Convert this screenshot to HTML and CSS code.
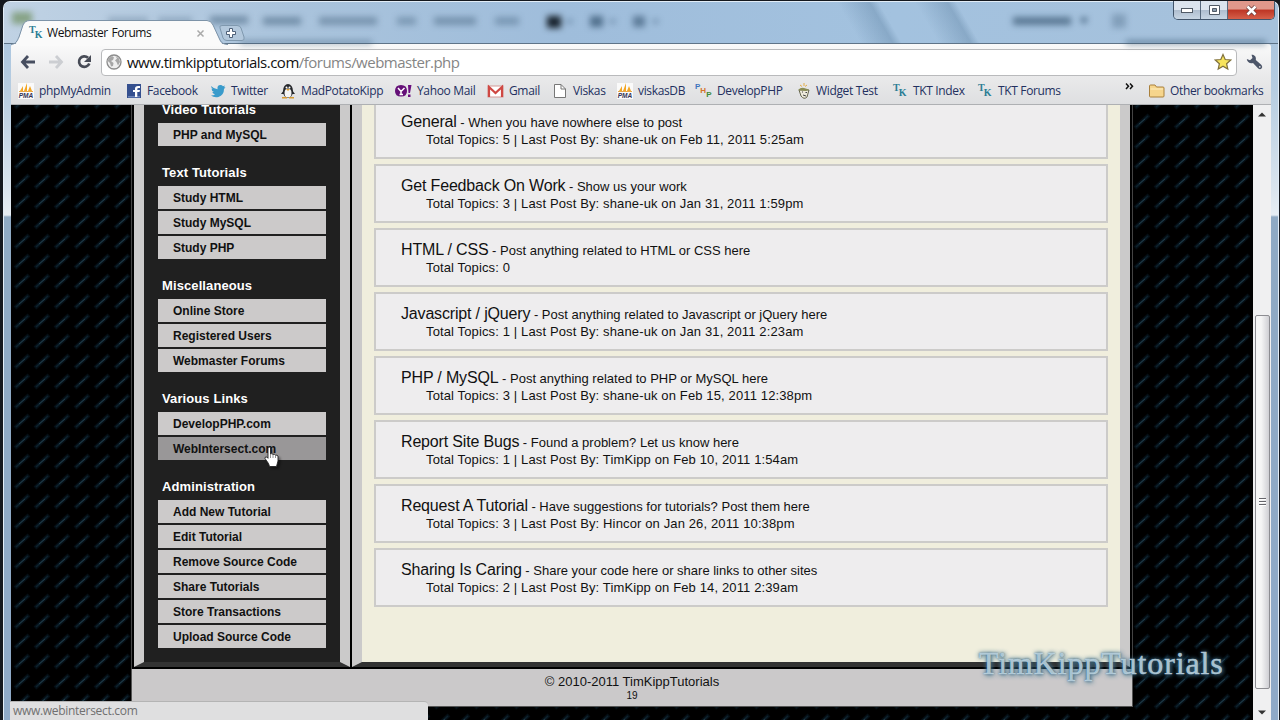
FILE: index.html
```
<!DOCTYPE html>
<html lang="en">
<head>
    <meta charset="UTF-8">
    <title>Webmaster Forums</title>
    <link rel="stylesheet" href="styles.css">
</head>
<body>
    <div class="window">
        <div class="titlebar">
            <svg class="backdrop" width="1280" height="44">
                <g fill="#31506c">
                    <rect x="108" y="17" width="40" height="8" opacity=".25"/>
                    <rect x="158" y="17" width="34" height="8" opacity=".25"/>
                    <rect x="210" y="16" width="38" height="8" opacity=".45"/>
                    <rect x="263" y="17" width="38" height="8" opacity=".45"/>
                    <rect x="319" y="17" width="58" height="8" opacity=".4"/>
                    <rect x="397" y="17" width="19" height="8" opacity=".35"/>
                    <rect x="434" y="17" width="42" height="8" opacity=".4"/>
                    <rect x="495" y="17" width="24" height="8" opacity=".35"/>
                    <rect x="547" y="16" width="14" height="12" fill="#17222c"/>
                    <rect x="590" y="16" width="13" height="11" opacity=".7"/>
                    <rect x="633" y="16" width="12" height="11" opacity=".6"/>
                    <path d="M566 20h7l-3 4zM609 20h7l-3 4zM652 20h7l-3 4z" opacity=".7"/>
                    <rect x="1013" y="17" width="58" height="8" opacity=".65"/>
                    <path d="M1080 18h8l-4 6z"/>
                    <rect x="1112" y="14" width="14" height="14" opacity=".3"/>
                    <rect x="1126" y="41" width="140" height="4" opacity=".8"/>
                    <rect x="240" y="41" width="132" height="4" opacity=".6"/>
                </g>
                <rect x="12" y="12" width="20" height="12" fill="#6d8f5d" opacity=".7"/>
            </svg>
            <div class="tab">
                <svg class="tab-shape" width="226" height="26" viewBox="0 0 226 26">
                    <path d="M0 26C5 25 6 22 8 18L12 5Q14 .5 19 .5H196Q200 .5 202 5L209 21Q211 25 217 26Z" fill="#fafafa"/>
                    <path d="M0 24.500C5 24 6 21 8 17L12 5Q14 .5 19 .5H196Q200 .5 202 5L209 20Q211 24.500 217 24.500" fill="none" stroke="#7d93a8"/>
                </svg>
                <span class="icon tk"><b>T</b><b>K</b></span>
                <span class="tab-title">Webmaster Forums</span>
                <svg class="tab-close" width="9" height="9" viewBox="0 0 9 9"><path d="M1.500 1.500L7.500 7.500M7.500 1.500L1.500 7.500" stroke="#a9a9a9" stroke-width="1.500"/></svg>
            </div>
            <svg class="new-tab" width="30" height="17" viewBox="0 0 30 17">
                <path d="M1 3Q0 .5 3 .5H18Q21 .5 22 3L25 12Q26 15.500 23 15.500H8Q5 15.500 4 13Z" fill="#b3c8dc" stroke="#7f98ae"/>
                <path d="M10.500 3.500h3v3h3v3h-3v3h-3v-3h-3v-3h3z" fill="#fff" stroke="#4e6078"/>
            </svg>
            <div class="controls">
                <span class="control minimize"><svg width="14" height="7"><rect x="1.500" y="1.500" width="11" height="4" fill="#fff" stroke="#505a66"/></svg></span>
                <span class="control maximize"><svg width="13" height="11"><path d="M1.500 .5h10v9h-10z" fill="#fff" stroke="#505a66"/><path d="M4.500 3.500h4v3h-4z" fill="#8b9dae" stroke="#505a66"/></svg></span>
                <span class="control close"><svg width="13" height="11" viewBox="0 0 13 11"><path d="M2.500 1.500L10.500 9.500M10.500 1.500L2.500 9.500" stroke="#673b39" stroke-width="4"/><path d="M2.500 1.500L10.500 9.500M10.500 1.500L2.500 9.500" stroke="#fff" stroke-width="2.500"/></svg></span>
            </div>
        </div>

        <div class="toolbar">
            <svg class="nav-icon" width="16" height="16" viewBox="0 0 16 16"><path d="M8 2L2.500 8L8 14M3 8H15" fill="none" stroke="#474e60" stroke-width="2.800"/></svg>
            <svg class="nav-icon" width="16" height="16" viewBox="0 0 16 16"><path d="M8 2L13.500 8L8 14M13 8H1" fill="none" stroke="#ccced2" stroke-width="2.800"/></svg>
            <svg class="nav-icon" width="16" height="16" viewBox="0 0 16 16"><path d="M12 3.800A5.300 5.300 0 1 0 13.300 9.500" fill="none" stroke="#474b56" stroke-width="2.700"/><path d="M15 1V8H8Z" fill="#474b56"/></svg>
            <div class="omnibox">
                <svg width="16" height="16" viewBox="0 0 16 16">
                    <circle cx="8" cy="8" r="7" fill="#eee" stroke="#8c8c8c" stroke-width="1.300"/>
                    <path d="M2.500 4.500L6 2L8 3.500L7 6L5 7L7.500 9L7 12L5 12.500L4 9L1.800 7zM9.500 2L13 4.500L14 8L12 11.500L10.500 8L9 6.500L11 4.500z" fill="#a6a6a6"/>
                </svg>
                <span class="url">www.timkipptutorials.com<span class="path">/forums/webmaster.php</span></span>
                <svg class="star" width="18" height="18" viewBox="0 0 18 18"><path d="M9 1.500L11.200 6.500L16.700 7L12.600 10.700L13.800 16.100L9 13.300L4.200 16.100L5.400 10.700L1.300 7L6.800 6.500Z" fill="#f8e45c" stroke="#80713c" stroke-width="1.200"/></svg>
            </div>
            <svg class="wrench" width="17" height="16" viewBox="0 0 17 16"><path d="M5.500 .8C8.500 .5 10.500 3 9.800 6L15.500 11Q17 13 15.500 14.500Q14 16 12 14.300L7 9C4 10 1 8 .8 5L4 6.200L6.500 4Z" fill="#4c5569"/><circle cx="13.800" cy="12.800" r=".9" fill="#ddd"/></svg>
        </div>

        <div class="bookmarks">
            <span class="bookmark"><span class="icon pma"><svg width="14" height="9" viewBox="0 0 14 9"><path d="M1 8L4 3V8zM5 8L8 0V8zM9 8L11 3L13 8z" fill="#f3a623"/><path d="M0 8.500H14" stroke="#e8a848"/></svg><b>PMA</b></span>phpMyAdmin</span>
            <span class="bookmark"><svg width="16" height="16" viewBox="0 0 16 16"><rect x="1" y="1" width="14" height="14" fill="#35508f"/><rect x="2" y="13" width="12" height="1.500" fill="#6d84b8"/><path d="M9 14V9H7V7H9V5.500Q9 3 12 3H14V5H12.500Q11.300 5 11.300 6V7H14L13.500 9H11.300V14Z" fill="#fff"/></svg>Facebook</span>
            <span class="bookmark"><svg width="16" height="16" viewBox="0 0 16 16"><path d="M1 3Q4 6 7.500 6.200Q7 2 10.500 2Q12 2 13 3.200L15 2.500L14 4.300L15.500 4.200L14 6Q14 12 8.500 14Q4 15 1 12.500Q4 12.500 5 11.300Q3 11 2.300 9H4Q1.500 8 1.500 5.500L2.800 6Q1 4.500 1 3Z" fill="#3a9bcb"/></svg>Twitter</span>
            <span class="bookmark"><svg width="16" height="16" viewBox="0 0 16 16"><ellipse cx="8" cy="8" rx="5" ry="7" fill="#25272b"/><path d="M4 7L1 11L4 11M12 7L15 11L12 11" fill="#25272b"/><ellipse cx="8" cy="10" rx="3.500" ry="4.500" fill="#f4f4f4"/><circle cx="6.500" cy="4.500" r="1" fill="#fff"/><circle cx="9.500" cy="4.500" r="1" fill="#fff"/><path d="M6 6H10L8 8ZM2 14H7V15.500H2ZM9 14H14V15.500H9Z" fill="#d79a31"/></svg>MadPotatoKipp</span>
            <span class="bookmark"><svg width="17" height="16" viewBox="0 0 17 16"><path d="M6 2Q12 2 12 8Q12 13.500 6 13.500Q0 13.500 0 8Q0 2 6 2Z" fill="#651078"/><path d="M3 5L6 8.500L9.500 5M6 8V11.500M4.500 11.500H8" fill="none" stroke="#fff" stroke-width="1.500"/><path d="M13 2H16.500L15 10H13.500ZM13 11.500H15.500V14H13Z" fill="#6b1080"/></svg>Yahoo Mail</span>
            <span class="bookmark"><svg width="17" height="16" viewBox="0 0 17 16"><rect x="1" y="3" width="15" height="11" fill="#fff" stroke="#d49a98"/><path d="M2 14V4L8.500 10L15 4V14" fill="none" stroke="#cf4843" stroke-width="2.200"/></svg>Gmail</span>
            <span class="bookmark"><svg width="15" height="16" viewBox="0 0 15 16"><path d="M1.500 1.500H8L12.500 6V14.500H1.500Z" fill="#fff" stroke="#777"/><path d="M8 1.500V6H12.500" fill="none" stroke="#777"/></svg>Viskas</span>
            <span class="bookmark"><span class="icon pma"><svg width="14" height="9" viewBox="0 0 14 9"><path d="M1 8L4 3V8zM5 8L8 0V8zM9 8L11 3L13 8z" fill="#f3a623"/><path d="M0 8.500H14" stroke="#e8a848"/></svg><b>PMA</b></span>viskasDB</span>
            <span class="bookmark"><span class="icon php"><b>P</b><b>H</b><b>P</b></span>DevelopPHP</span>
            <span class="bookmark"><svg width="15" height="16" viewBox="0 0 15 16"><path d="M3 7H13L11 14Q8 17 5 13Z" fill="#eeeadb" stroke="#66664d"/><path d="M2 7Q5 4 8 5L13 6.500L10 8Z" fill="#8a8c52"/><path d="M4 2L6 3.500M8 0V3M11 2L9 3.500" stroke="#e4ac45"/><path d="M6 9H7M9.500 9.500H11M7 12L10 13" stroke="#444"/></svg>Widget Test</span>
            <span class="bookmark"><span class="icon tk"><b>T</b><b>K</b></span>TKT Index</span>
            <span class="bookmark"><span class="icon tk"><b>T</b><b>K</b></span>TKT Forums</span>
            <svg class="more" width="9" height="7" viewBox="0 0 9 7"><path d="M1 .5L3.500 3.200L1 6M5 .5L7.500 3.200L5 6" fill="none" stroke="#111" stroke-width="1.500"/></svg>
            <span class="bookmark"><svg width="16" height="16" viewBox="0 0 16 16"><path d="M.5 13V3Q.5 2 1.500 2H6L7.500 4H14Q15 4 15 5V13Q15 14 14 14H1.500Q.5 14 .5 13Z" fill="#f6d58c" stroke="#a9803c"/><path d="M1.500 6H14" stroke="#fdedbf"/></svg>Other bookmarks</span>
        </div>

        <div class="viewport">
            <div class="page">
                <div class="columns">
                    <div class="sidebar">
                        <h2>Video Tutorials</h2>
                        <ul>
                            <li>PHP and MySQL</li>
                        </ul>
                        <h2>Text Tutorials</h2>
                        <ul>
                            <li>Study HTML</li>
                            <li>Study MySQL</li>
                            <li>Study PHP</li>
                        </ul>
                        <h2>Miscellaneous</h2>
                        <ul>
                            <li>Online Store</li>
                            <li>Registered Users</li>
                            <li>Webmaster Forums</li>
                        </ul>
                        <h2>Various Links</h2>
                        <ul>
                            <li>DevelopPHP.com</li>
                            <li class="hover">WebIntersect.com</li>
                        </ul>
                        <h2>Administration</h2>
                        <ul>
                            <li>Add New Tutorial</li>
                            <li>Edit Tutorial</li>
                            <li>Remove Source Code</li>
                            <li>Share Tutorials</li>
                            <li>Store Transactions</li>
                            <li>Upload Source Code</li>
                        </ul>
                    </div>
                    <div class="forums">
                        <div class="forum">
                            <p><span class="name">General</span> - When you have nowhere else to post</p>
                            <p class="stats">Total Topics: 5 | Last Post By: shane-uk on Feb 11, 2011 5:25am</p>
                        </div>
                        <div class="forum">
                            <p><span class="name">Get Feedback On Work</span> - Show us your work</p>
                            <p class="stats">Total Topics: 3 | Last Post By: shane-uk on Jan 31, 2011 1:59pm</p>
                        </div>
                        <div class="forum">
                            <p><span class="name">HTML / CSS</span> - Post anything related to HTML or CSS here</p>
                            <p class="stats">Total Topics: 0</p>
                        </div>
                        <div class="forum">
                            <p><span class="name">Javascript / jQuery</span> - Post anything related to Javascript or jQuery here</p>
                            <p class="stats">Total Topics: 1 | Last Post By: shane-uk on Jan 31, 2011 2:23am</p>
                        </div>
                        <div class="forum">
                            <p><span class="name">PHP / MySQL</span> - Post anything related to PHP or MySQL here</p>
                            <p class="stats">Total Topics: 3 | Last Post By: shane-uk on Feb 15, 2011 12:38pm</p>
                        </div>
                        <div class="forum">
                            <p><span class="name">Report Site Bugs</span> - Found a problem? Let us know here</p>
                            <p class="stats">Total Topics: 1 | Last Post By: TimKipp on Feb 10, 2011 1:54am</p>
                        </div>
                        <div class="forum">
                            <p><span class="name">Request A Tutorial</span> - Have suggestions for tutorials? Post them here</p>
                            <p class="stats">Total Topics: 3 | Last Post By: Hincor on Jan 26, 2011 10:38pm</p>
                        </div>
                        <div class="forum">
                            <p><span class="name">Sharing Is Caring</span> - Share your code here or share links to other sites</p>
                            <p class="stats">Total Topics: 2 | Last Post By: TimKipp on Feb 14, 2011 2:39am</p>
                        </div>
                    </div>
                </div>
                <div class="footer">
                    <p>© 2010-2011 TimKippTutorials</p>
                    <p class="count">19</p>
                </div>
            </div>
            <div class="scrollbar">
                <svg width="8" height="5"><path d="M0 4.500L4 .5L8 4.500Z" fill="#333"/></svg>
                <div class="thumb"><i></i><i></i><i></i></div>
                <svg width="8" height="5"><path d="M0 .5L4 4.500L8 .5Z" fill="#333"/></svg>
            </div>
        </div>
    </div>

    <div class="status">www.webintersect.com</div>
    <div class="watermark">TimKippTutorials</div>
    <svg class="cursor" width="18" height="23" viewBox="0 0 18 23"><path d="M4 1.500Q5.500 .5 6.500 2V8Q8 7 9 8.500Q10.500 7.800 11.500 9.300Q13 8.800 14 10V15L12.500 20.500H5.500L4.500 17.500L1 12.500Q.8 10.500 2.800 11L4 12.300Z" fill="#fff" stroke="#222" stroke-width=".9"/><path d="M6.500 8V12M9 8.500V12M11.500 9.500V12" stroke="#777" stroke-width=".8"/></svg>
</body>
</html>
```
FILE: styles.css
```
* {
    margin: 0;
    padding: 0;
    box-sizing: border-box;
}

body {
    width: 1280px;
    height: 720px;
    overflow: hidden;
    position: relative;
    background: #14181e;
    font-family: "Liberation Sans", Arial, sans-serif;
    color: #111;
}

svg {
    flex: none;
}

.window {
    display: flex;
    flex-direction: column;
    height: 719px;
    margin: 1px 1px 0 3px;
    padding: 0 7px 0 7px;
    border: 1px solid #e2edf7;
    border-bottom: 0;
    border-radius: 7px 7px 0 0;
    background: linear-gradient(#a4c1de 0, #b7cde1 90px, #dbe5ee 190px, #e6edf3 213px, #8faac4 215px, #8faac8 100%);
}

/* title bar */
.titlebar {
    display: flex;
    height: 42px;
    margin: 0 -7px;
    padding-left: 7px;
    border-bottom: 1px solid #5f7488;
    background:
        linear-gradient(60deg, transparent 66%, rgba(75, 112, 145, .3) 68.500%, transparent 69.200%, transparent 72%, rgba(75, 112, 145, .3) 74.500%, transparent 75.200%),
        linear-gradient(90deg, #c0d2e4, #a9c3dc 300px, #9fbddb 560px, #a3c2df 70%, #a6c1db);
    border-radius: 6px 6px 0 0;
}

.backdrop {
    position: absolute;
    left: 0;
    top: 0;
    filter: blur(3px);
}

.tab {
    display: flex;
    align-items: center;
    width: 208px;
    height: 26px;
    margin-top: 18px;
    padding-left: 17px;
    position: relative;
    font: 12px "Open Sans", "Segoe UI", sans-serif;
}

.tab-shape {
    position: absolute;
    left: 0;
    top: 0;
}

.tab .icon,
.tab-title,
.tab-close {
    position: relative;
}

.tab-title {
    margin-left: 3px;
    margin-top: -2px;
    letter-spacing: -.5px;
    word-spacing: 1px;
    letter-spacing: -.43px;
}

.tab-close {
    margin-left: auto;
    margin-right: 14px;
}

.new-tab {
    margin-top: 23px;
    position: relative;
}

.controls {
    display: flex;
    height: 19px;
    margin: -1px 3px 0 auto;
    border: 1px solid #41546a;
    border-top: 0;
    border-radius: 0 0 5px 5px;
    overflow: hidden;
    position: relative;
}

.control {
    display: flex;
    align-items: center;
    justify-content: center;
    width: 27px;
    border-right: 1px solid #56687c;
    background: linear-gradient(#dbe4ee 48%, #aebdce 50%, #c8d6e4);
}

.control.close {
    width: 46px;
    border-right: 0;
    background: linear-gradient(#e0988b 45%, #bd3524 50%, #d5604a);
}

/* small lettered icons */
.icon {
    display: flex;
    flex: none;
    width: 16px;
    height: 16px;
    letter-spacing: 0;
}

.tk {
    font: bold 10px/10px "Liberation Serif", serif;
    color: #2b7d94;
    padding-left: 1px;
}

.tk b + b {
    margin-top: 5px;
    margin-left: -1px;
}

.pma {
    flex-direction: column;
    align-items: center;
    background: #fafafa;
    font: italic bold 6.5px/7px "Liberation Sans", sans-serif;
    color: #333355;
}

.php {
    width: 17px;
    font: bold 8px/8px "Liberation Sans", sans-serif;
    color: #3e75bd;
}

.php b + b {
    margin-top: 4px;
    color: #d4732c;
}

.php b + b + b {
    margin-top: 8px;
    color: #3d8a35;
}

/* toolbar */
.toolbar {
    display: flex;
    align-items: center;
    flex: none;
    height: 34px;
    padding: 2px 8px 0 9px;
    background: linear-gradient(#fafafa, #e9e9ea);
    border-radius: 3px 3px 0 0;
}

.nav-icon {
    margin-right: 12px;
}

.nav-icon:nth-child(3) {
    margin-right: 3px;
}

.omnibox {
    display: flex;
    align-items: center;
    flex: 1;
    height: 27px;
    margin: 0 9px 0 6px;
    padding: 0 4px;
    background: #fff;
    border: 1px solid #b9babc;
    border-radius: 4px;
}

.url {
    margin-left: 5px;
    margin-top: -1px;
    font: 15px "Open Sans", "Segoe UI", sans-serif;
    letter-spacing: -.51px;
}

.url .path {
    color: #858585;
}

.star {
    margin-left: auto;
}

.bookmarks {
    display: grid;
    grid-template-columns: 108px 84px 70px 115px 92px 66px 64px 78px 101px 96px 85px 148px 24px 1fr;
    align-items: center;
    flex: none;
    height: 27px;
    padding-left: 7px;
    background: linear-gradient(#e9e9ea, #dedfe1);
    border-bottom: 1px solid #aeb0b3;
}

.bookmark {
    display: flex;
    align-items: center;
    gap: 5px;
    margin-top: -1px;
    white-space: nowrap;
    font: 12px "Open Sans", "Segoe UI", sans-serif;
    letter-spacing: -.35px;
    color: #23305f;
}

.more {
    align-self: start;
    margin-top: 5px;
}

/* page */
.viewport {
    display: flex;
    flex: 1;
    min-height: 0;
    overflow: hidden;
    background: #000 url("data:image/svg+xml,%3Csvg xmlns='http://www.w3.org/2000/svg' width='20' height='20'%3E%3Cpath d='M4 15L18 2' stroke='%23040e15' stroke-width='4'/%3E%3Cpath d='M5 14L17 3' stroke='%230d222d' stroke-width='1.500'/%3E%3Cpath d='M8 11L14 6' stroke='%23213b47' stroke-width='1'/%3E%3C/svg%3E") 0 8px;
}

.page {
    width: 1002px;
    margin: -12px 0 0 120px;
}

.columns {
    display: flex;
    gap: 2px;
    height: 576px;
    padding: 0 2px 2px 2px;
    background: #000;
    border-left: 1px solid #444;
    border-right: 1px solid #444;
}

.sidebar {
    width: 216px;
    border: 10px solid #cbcaca;
    border-top: 0;
    border-bottom: 5px solid #333;
    background: #202020;
    padding: 0 14px;
}

.sidebar h2 {
    height: 40px;
    padding: 18px 0 0 4px;
    font-size: 13px;
    line-height: 17px;
    letter-spacing: .1px;
    color: #fff;
}

.sidebar h2:first-child {
    height: 30px;
    padding-top: 8px;
}

.sidebar ul {
    display: flex;
    flex-direction: column;
    gap: 2px;
    list-style: none;
}

.sidebar li {
    height: 23px;
    padding-left: 15px;
    background: #cccaca;
    font-size: 12px;
    font-weight: bold;
    line-height: 24px;
}

.sidebar li.hover {
    background: #999798;
}

.forums {
    display: flex;
    flex-direction: column;
    gap: 5px;
    flex: 1;
    padding: 7px 12px 0;
    border: 10px solid #cbcaca;
    border-top: 0;
    border-bottom: 5px solid #333;
    background: #f0eedd;
}

.forum {
    height: 59px;
    padding: 11px 25px;
    border: 2px solid #cccbc9;
    background: #eeedee;
    font-size: 13px;
    line-height: 18px;
}

.forum .name {
    font-size: 16px;
    letter-spacing: -.17px;
}

.forum .stats {
    margin-top: -1px;
    padding-left: 25px;
    letter-spacing: .13px;
}

.footer {
    height: 38px;
    padding-top: 4px;
    background: #cbc9ca;
    border: 1px solid #555;
    border-top: 0;
    text-align: center;
    font-size: 13px;
    line-height: 17px;
}

.footer .count {
    font-size: 10px;
    line-height: 11px;
}

.scrollbar {
    display: flex;
    flex-direction: column;
    align-items: center;
    width: 18px;
    margin-left: auto;
    padding-top: 7px;
    background: #f0f0f1;
}

.thumb {
    display: flex;
    flex-direction: column;
    align-items: center;
    justify-content: center;
    gap: 1px;
    width: 15px;
    height: 374px;
    margin: 198px 0 21px;
    border: 1px solid #8d8d92;
    border-radius: 2px;
    background: linear-gradient(90deg, #f5f5f5 40%, #cfcfd4);
}

.thumb i {
    width: 7px;
    height: 2px;
    background: #65656b;
    border-bottom: 1px solid #fff;
}

/* overlays */
.status {
    position: absolute;
    left: 10px;
    bottom: 0;
    width: 418px;
    height: 19px;
    padding: 1px 3px;
    background: #dfdfe0;
    border-top: 1px solid #b4b4b4;
    border-radius: 0 4px 0 0;
    font: 12px/16px "Open Sans", "Segoe UI", sans-serif;
    letter-spacing: -.3px;
    color: #707070;
}

.watermark {
    position: absolute;
    left: 979px;
    top: 645px;
    font: 32px/36px "Liberation Serif", "Palatino Linotype", serif;
    letter-spacing: .88px;
    color: rgba(190, 214, 226, .85);
    -webkit-text-stroke: .5px rgba(190, 214, 226, .8);
    text-shadow: 0 0 2px #31546a, 0 0 5px #3f738e, 1px 1px 5px #3f738e;
}

.cursor {
    position: absolute;
    left: 264px;
    top: 446px;
    filter: drop-shadow(2px 2px 1px rgba(0, 0, 0, .4));
}
```
